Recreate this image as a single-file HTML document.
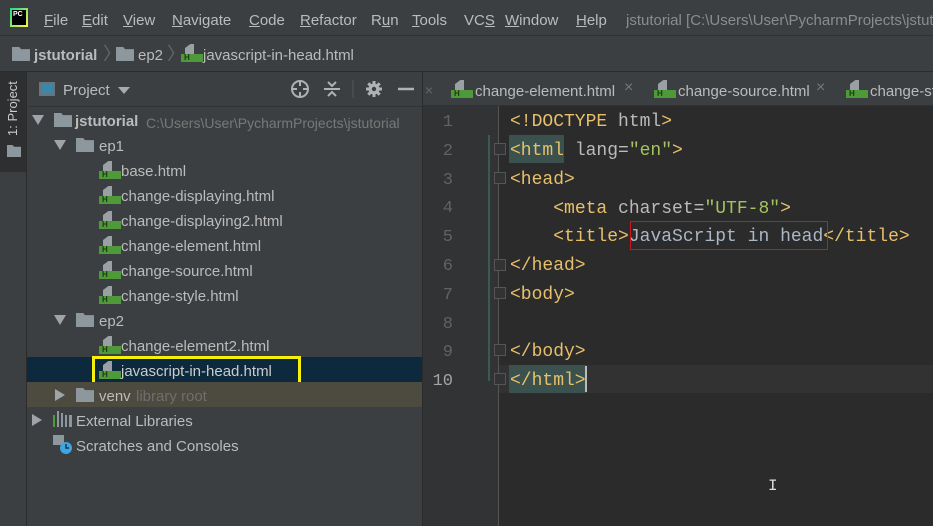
<!DOCTYPE html>
<html><head><meta charset="utf-8"><style>
*{margin:0;padding:0;box-sizing:border-box}
html,body{overflow:hidden}
body{width:933px;height:526px;overflow:hidden;background:#3c3f41;font-family:"Liberation Sans",sans-serif;color:#bbbbbb;position:relative}
.a{position:absolute;white-space:nowrap}
.t{font-size:15px;line-height:18px;margin-top:2px}
.u{text-decoration:underline}
.hi{position:absolute;width:20px;height:19px}
.hi:before{content:"";position:absolute;left:4px;top:0;width:9px;height:10px;background:#9aa0a4;clip-path:polygon(0 40%,60% 0,100% 0,100% 100%,0 100%)}
.hi:after{content:"H";position:absolute;left:0;top:10px;width:19px;height:8px;background:#4e9a3a;color:#1d3a12;font:bold 8px/8px "Liberation Sans",sans-serif;padding-left:3px}
.fo{position:absolute;width:18px;height:14px;background:#8c979e;clip-path:polygon(0 0,40% 0,50% 15%,100% 15%,100% 100%,0 100%)}
.tri{position:absolute;width:0;height:0;border-left:6px solid transparent;border-right:6px solid transparent;border-top:10px solid #a0a4a8}
.trr{position:absolute;width:0;height:0;border-top:6px solid transparent;border-bottom:6px solid transparent;border-left:10px solid #a0a4a8}
.code{position:absolute;left:510px;font-family:"Liberation Mono",monospace;font-size:18px;line-height:20px;white-space:pre;color:#a9b7c6;margin-top:2px}
.tg{color:#e8bf6a}.at{color:#bababa}.st{color:#a5c261}
.ln{position:absolute;left:423px;width:30px;text-align:right;font-family:"Liberation Mono",monospace;font-size:17px;color:#606366;margin-top:2px}
.fold{position:absolute;left:494px;width:12px;height:12px;border:1px solid #555;background:#313335}
</style></head><body>
<div class="a" style="left:0;top:0;width:933px;height:36px;background:#3c3f41;border-bottom:1px solid #323232"></div>
<div class="a" style="left:10px;top:8px;width:18px;height:19px;background:linear-gradient(135deg,#21d789,#fcf84a);padding:2px"><div style="background:#000;width:100%;height:100%;color:#fff;font:bold 7px/8px 'Liberation Sans';padding:1px">PC</div></div>
<div class="a t" style="left:44px;top:10px"><span class="u">F</span>ile</div>
<div class="a t" style="left:82px;top:10px"><span class="u">E</span>dit</div>
<div class="a t" style="left:123px;top:10px"><span class="u">V</span>iew</div>
<div class="a t" style="left:172px;top:10px"><span class="u">N</span>avigate</div>
<div class="a t" style="left:249px;top:10px"><span class="u">C</span>ode</div>
<div class="a t" style="left:300px;top:10px"><span class="u">R</span>efactor</div>
<div class="a t" style="left:371px;top:10px">R<span class="u">u</span>n</div>
<div class="a t" style="left:412px;top:10px"><span class="u">T</span>ools</div>
<div class="a t" style="left:464px;top:10px">VC<span class="u">S</span></div>
<div class="a t" style="left:505px;top:10px"><span class="u">W</span>indow</div>
<div class="a t" style="left:576px;top:10px"><span class="u">H</span>elp</div>
<div class="a t" style="left:626px;top:10px;color:#8c8c8c;width:307px;overflow:hidden">jstutorial [C:\Users\User\PycharmProjects\jstutorial]</div>
<div class="a" style="left:0;top:71px;width:933px;height:1px;background:#2b2b2b"></div>
<div class="fo" style="left:12px;top:47px"></div>
<div class="a t" style="left:34px;top:45px;font-weight:bold">jstutorial</div>
<div class="a t" style="left:103px;top:43px;color:#666;font-size:18px">〉</div>
<div class="fo" style="left:116px;top:47px"></div>
<div class="a t" style="left:138px;top:45px">ep2</div>
<div class="a t" style="left:167px;top:43px;color:#666;font-size:18px">〉</div>
<div class="hi" style="left:181px;top:44px"></div>
<div class="a t" style="left:203px;top:45px">javascript-in-head.html</div>
<div class="a" style="left:0;top:72px;width:27px;height:454px;background:#3c3f41;border-right:1px solid #2b2b2b"></div>
<div class="a" style="left:0;top:72px;width:26px;height:100px;background:#2d2f31"></div>
<div class="a" style="left:5px;top:136px;transform:rotate(-90deg);transform-origin:0 0;font-size:13px;color:#ccc">1: Project</div>
<div class="fo" style="left:7px;top:145px;width:14px;height:12px"></div>
<div class="a" style="left:28px;top:106px;width:394px;height:1px;background:#323232"></div>
<div class="a" style="left:39px;top:82px;width:16px;height:14px;border:2px solid #6b737a;background:#3a87a8"></div>
<div class="a t" style="left:63px;top:80px">Project</div>
<div class="a" style="left:118px;top:87px;border-left:6px solid transparent;border-right:6px solid transparent;border-top:7px solid #aaa"></div>
<svg class="a" style="left:290px;top:78px" width="130" height="22"><g stroke="#aeb2b5" stroke-width="2" fill="none"><circle cx="10" cy="11" r="8"/><path d="M10 3v5M10 14v5M2 11h5M13 11h5"/><path d="M34 11h16M38 4l4 4 4-4M38 18l4-4 4 4"/></g><line x1="63" y1="2" x2="63" y2="20" stroke="#555"/><circle cx="84" cy="11" r="5.5" fill="#aeb2b5"/><g stroke="#aeb2b5" stroke-width="3"><path d="M84 3v16M76 11h16M78.3 5.3l11.4 11.4M89.7 5.3l-11.4 11.4"/></g><circle cx="84" cy="11" r="2.2" fill="#3c3f41"/><path d="M108 11h16" stroke="#aeb2b5" stroke-width="2.5"/></svg>
<div class="tri" style="left:32px;top:115px"></div><div class="fo" style="left:54px;top:113px"></div>
<div class="a t" style="left:75px;top:111px;font-weight:bold">jstutorial</div>
<div class="a t" style="left:146px;top:112px;color:#787878;font-size:14px">C:\Users\User\PycharmProjects\jstutorial</div>
<div class="tri" style="left:54px;top:140px"></div><div class="fo" style="left:76px;top:138px"></div>
<div class="a t" style="left:99px;top:136px">ep1</div>
<div class="hi" style="left:99px;top:161px"></div><div class="a t" style="left:121px;top:161px">base.html</div>
<div class="hi" style="left:99px;top:186px"></div><div class="a t" style="left:121px;top:186px">change-displaying.html</div>
<div class="hi" style="left:99px;top:211px"></div><div class="a t" style="left:121px;top:211px">change-displaying2.html</div>
<div class="hi" style="left:99px;top:236px"></div><div class="a t" style="left:121px;top:236px">change-element.html</div>
<div class="hi" style="left:99px;top:261px"></div><div class="a t" style="left:121px;top:261px">change-source.html</div>
<div class="hi" style="left:99px;top:286px"></div><div class="a t" style="left:121px;top:286px">change-style.html</div>
<div class="tri" style="left:54px;top:315px"></div><div class="fo" style="left:76px;top:313px"></div>
<div class="a t" style="left:99px;top:311px">ep2</div>
<div class="hi" style="left:99px;top:336px"></div><div class="a t" style="left:121px;top:336px">change-element2.html</div>
<div class="a" style="left:27px;top:357px;width:395px;height:25px;background:#0d293e"></div>
<div class="hi" style="left:99px;top:361px"></div><div class="a t" style="left:121px;top:361px;color:#ccc">javascript-in-head.html</div>
<div class="a" style="left:92px;top:356px;width:209px;height:33px;border:3px solid #f5f10a"></div>
<div class="a" style="left:27px;top:382px;width:395px;height:25px;background:#4d4a40"></div>
<div class="trr" style="left:55px;top:389px"></div><div class="fo" style="left:76px;top:388px"></div>
<div class="a t" style="left:99px;top:386px">venv</div><div class="a t" style="left:136px;top:386px;color:#6e6e6e">library root</div>
<div class="trr" style="left:32px;top:414px"></div>
<svg class="a" style="left:53px;top:411px" width="20" height="16"><g fill="#4e9a3a"><rect x="0" y="4" width="2" height="12"/></g><g fill="#8c979e"><rect x="4" y="0" width="2" height="16"/><rect x="8" y="2" width="2" height="14"/><rect x="12" y="4" width="2" height="12"/><rect x="16" y="4" width="3" height="12"/></g></svg>
<div class="a t" style="left:76px;top:411px">External Libraries</div>
<svg class="a" style="left:53px;top:435px" width="20" height="20"><rect x="0" y="0" width="11" height="10" fill="#8c979e"/><circle cx="13" cy="13" r="6" fill="#3fa5e0"/><path d="M13 9v4h3" stroke="#1a3550" fill="none" stroke-width="1.5"/></svg>
<div class="a t" style="left:76px;top:436px">Scratches and Consoles</div>
<div class="a" style="left:422px;top:72px;width:1px;height:454px;background:#2b2b2b"></div>
<div class="a" style="left:423px;top:72px;width:510px;height:34px;background:#3c3f41;border-bottom:1px solid #323232;overflow:hidden">
<div class="a" style="left:2px;top:10px;color:#666;font-size:14px">×</div>
<div class="hi" style="left:28px;top:8px"></div><div class="a t" style="left:52px;top:9px">change-element.html</div><div class="a" style="left:201px;top:7px;color:#777;font-size:16px">×</div>
<div class="hi" style="left:231px;top:8px"></div><div class="a t" style="left:255px;top:9px">change-source.html</div><div class="a" style="left:393px;top:7px;color:#777;font-size:16px">×</div>
<div class="hi" style="left:423px;top:8px"></div><div class="a t" style="left:447px;top:9px">change-style.html</div>
</div>
<div class="a" style="left:423px;top:106px;width:76px;height:420px;background:#313335"></div>
<div class="a" style="left:499px;top:106px;width:434px;height:420px;background:#2b2b2b"></div>
<div class="a" style="left:498px;top:106px;width:1px;height:420px;background:#555"></div>
<div class="a" style="left:499px;top:365px;width:434px;height:28px;background:#323232"></div>
<div class="a" style="left:488px;top:135px;width:2px;height:246px;background:#3d5a52"></div>
<div class="ln" style="top:111px">1</div><div class="ln" style="top:140px">2</div><div class="ln" style="top:169px">3</div><div class="ln" style="top:197px">4</div><div class="ln" style="top:226px">5</div><div class="ln" style="top:255px">6</div><div class="ln" style="top:284px">7</div><div class="ln" style="top:313px">8</div><div class="ln" style="top:341px">9</div><div class="ln" style="top:370px;color:#a4a3a3">10</div>
<div class="fold" style="top:143px"></div><div class="fold" style="top:172px"></div><div class="fold" style="top:259px"></div><div class="fold" style="top:287px"></div><div class="fold" style="top:344px"></div><div class="fold" style="top:373px"></div>
<div class="a" style="left:509px;top:135px;width:55px;height:28px;background:#3b514d"></div>
<div class="a" style="left:509px;top:365px;width:77px;height:28px;background:#3b514d"></div>
<div class="code" style="top:110px"><span class="tg">&lt;!DOCTYPE </span><span class="at">html</span><span class="tg">&gt;</span></div>
<div class="code" style="top:139px"><span class="tg">&lt;html </span><span class="at">lang=</span><span class="st">"en"</span><span class="tg">&gt;</span></div>
<div class="code" style="top:168px"><span class="tg">&lt;head&gt;</span></div>
<div class="code" style="top:197px">    <span class="tg">&lt;meta </span><span class="at">charset=</span><span class="st">"UTF-8"</span><span class="tg">&gt;</span></div>
<div class="code" style="top:225px">    <span class="tg">&lt;title&gt;</span>JavaScript in head<span class="tg">&lt;/title&gt;</span></div>
<div class="a" style="left:630px;top:221px;width:198px;height:29px;border:1px solid #d0161b"></div>
<div class="code" style="top:254px"><span class="tg">&lt;/head&gt;</span></div>
<div class="code" style="top:283px"><span class="tg">&lt;body&gt;</span></div>
<div class="code" style="top:340px"><span class="tg">&lt;/body&gt;</span></div>
<div class="code" style="top:369px"><span class="tg">&lt;/html&gt;</span></div>
<div class="a" style="left:585px;top:366px;width:2px;height:26px;background:#bbb"></div>
<div class="a" style="left:768px;top:477px;color:#ddd;font-size:16px;font-family:'Liberation Mono'">I</div>
</body></html>
